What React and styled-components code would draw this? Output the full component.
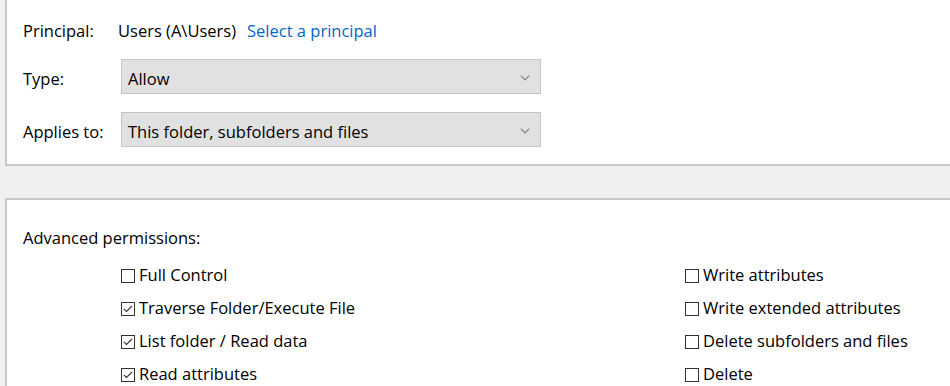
import React from 'react';
import styled, { createGlobalStyle } from 'styled-components';

const GlobalStyle = createGlobalStyle`
  html, body {
    margin: 0;
    padding: 0;
    background: #f0f0f0;
  }
  body {
    font-family: "Open Sans", "Noto Sans", sans-serif;
    font-size: 16.5px;
    color: #000;
  }
`;

const Page = styled.div`
  height: 386px;
  overflow: hidden;
  padding-left: 5px;
`;

const Panel = styled.section`
  background: #fff;
  border-left: 2px solid #c8c8c8;
  ${(p) => (p.top ? 'border-bottom: 2px solid #c8c8c8;' : 'border-top: 2px solid #c8c8c8;')}
  margin-right: -20px;
  margin-top: ${(p) => p.offset || 0}px;
  padding: ${(p) => (p.top ? '18px 0 17px 16px' : '26px 0 40px 16px')};
`;

const Row = styled.div`
  display: flex;
  align-items: center;
  margin-top: ${(p) => p.gap || 0}px;
  height: ${(p) => p.height}px;
`;

const Label = styled.span`
  width: ${(p) => p.width}px;
  flex: none;
  padding-top: ${(p) => p.drop || 0}px;
  line-height: 26px;
`;

const Value = styled.span`
  line-height: 26px;
  margin-right: 11px;
`;

const Link = styled.a`
  color: #0066cc;
  text-decoration: none;
  line-height: 26px;
  cursor: pointer;
`;

const Select = styled.div`
  width: 420px;
  height: 35px;
  box-sizing: border-box;
  background: #e1e1e1;
  border: 1px solid #c4c4c4;
  display: flex;
  align-items: center;
  justify-content: space-between;
  padding: 3px 10px 0 6px;
`;

const Chevron = () => (
  <svg width="10" height="6" viewBox="0 0 10 6">
    <polyline points="0.8,0.8 5,4.8 9.2,0.8" fill="none" stroke="#8a8a8a" strokeWidth="1.2" />
  </svg>
);

const Heading = styled.div`
  line-height: 24px;
`;

const PermGrid = styled.div`
  display: grid;
  grid-template-columns: 564px 1fr;
  grid-auto-flow: column;
  grid-template-rows: repeat(4, 33px);
  margin-top: 8px;
  padding-left: 98px;
`;

const Check = styled.label`
  display: flex;
  align-items: center;
  gap: 4px;
  white-space: nowrap;
`;

const Box = styled.span`
  width: 14px;
  height: 14px;
  box-sizing: border-box;
  border: 1px solid #333;
  background: #fff;
  display: flex;
  align-items: center;
  justify-content: center;
  flex: none;
  margin-top: 2px;
`;

const Tick = () => (
  <svg width="12" height="12" viewBox="0 0 12 12">
    <polyline points="1.8,5.8 4.5,8.5 10,3" fill="none" stroke="#333" strokeWidth="1.1" />
  </svg>
);

const permissions = [
  { name: 'Full Control', checked: false },
  { name: 'Traverse Folder/Execute File', checked: true },
  { name: 'List folder / Read data', checked: true },
  { name: 'Read attributes', checked: true },
  { name: 'Write attributes', checked: false },
  { name: 'Write extended attributes', checked: false },
  { name: 'Delete subfolders and files', checked: false },
  { name: 'Delete', checked: false },
];

export default function App() {
  return (
    <Page>
      <GlobalStyle />
      <Panel top>
        <Row height={26}>
          <Label width={95}>Principal:</Label>
          <Value>Users (A\Users)</Value>
          <Link>Select a principal</Link>
        </Row>
        <Row gap={15} height={35}>
          <Label width={98} drop={4}>Type:</Label>
          <Select>
            <span>Allow</span>
            <Chevron />
          </Select>
        </Row>
        <Row gap={18} height={35}>
          <Label width={98} drop={4}>Applies to:</Label>
          <Select>
            <span>This folder, subfolders and files</span>
            <Chevron />
          </Select>
        </Row>
      </Panel>
      <Panel offset={32}>
        <Heading>Advanced permissions:</Heading>
        <PermGrid>
          {permissions.map((p) => (
            <Check key={p.name}>
              <Box>{p.checked && <Tick />}</Box>
              {p.name}
            </Check>
          ))}
        </PermGrid>
      </Panel>
    </Page>
  );
}
